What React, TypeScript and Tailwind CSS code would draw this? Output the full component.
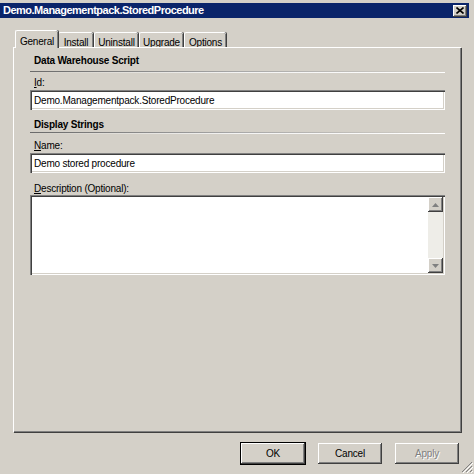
import React from "react";

const raised =
  "shadow-[inset_-1px_-1px_0_#404040,inset_1px_1px_0_#ffffff,inset_-2px_-2px_0_#808080,inset_2px_2px_0_#d4d0c8]";
const sunken =
  "shadow-[inset_1px_1px_0_#808080,inset_2px_2px_0_#404040,inset_-1px_-1px_0_#ffffff,inset_-2px_-2px_0_#d4d0c8]";

function Tab({ label, width, selected }: { label: string; width: string; selected?: boolean }) {
  if (selected) {
    return (
      <div
        className={`${width} relative z-10 -mb-px -mr-px flex h-[18px] items-start justify-center rounded-t-[2px] border-l border-t border-white bg-[#d4d0c8] pt-[3px] shadow-[inset_-1px_0_0_#808080,1px_0_0_#404040]`}
      >
        {label}
      </div>
    );
  }
  return (
    <div
      className={`${width} flex h-[15px] items-start justify-center rounded-t-[2px] border-l border-t border-white bg-[#d4d0c8] pt-[2px] shadow-[inset_-1px_0_0_#808080,1px_0_0_#404040]`}
    >
      {label}
    </div>
  );
}

function Section({ title }: { title: string }) {
  return <div className="h-[13px] pl-[4px] font-bold leading-[13px]">{title}</div>;
}

function Rule() {
  return (
    <div className="flex flex-col">
      <div className="h-px bg-gradient-to-r from-[#6a6a6a] via-[#a8a8a8] to-[#d4d0c8]" />
      <div className="h-px bg-gradient-to-r from-[#d4d0c8] via-[#f4f4f4] to-white" />
    </div>
  );
}

function Label({ hot, rest }: { hot: string; rest: string }) {
  return (
    <div className="h-[13px] pl-[4px] leading-[13px]">
      <span className="underline underline-offset-1">{hot}</span>
      {rest}
    </div>
  );
}

function Field({ value }: { value: string }) {
  return (
    <div className={`flex h-[20px] items-center bg-white pl-[4px] pt-px ${sunken}`}>{value}</div>
  );
}

function Arrow({ up }: { up?: boolean }) {
  return (
    <div className={`flex h-[15px] w-[15px] items-center justify-center bg-[#d4d0c8] ${raised}`}>
      <svg width="7" height="4" viewBox="0 0 7 4">
        {up ? (
          <polygon points="3.5,0 7,4 0,4" fill="#808080" />
        ) : (
          <polygon points="0,0 7,0 3.5,4" fill="#808080" />
        )}
      </svg>
    </div>
  );
}

function Button({ label, primary, disabled }: { label: string; primary?: boolean; disabled?: boolean }) {
  return (
    <div
      className={`flex h-[21px] w-[64px] items-center justify-center bg-[#d4d0c8] ${
        primary ? "outline outline-1 outline-black" : ""
      } ${raised}`}
    >
      <span className={disabled ? "text-[#808080] [text-shadow:1px_1px_0_#ffffff]" : ""}>{label}</span>
    </div>
  );
}

export default function App() {
  return (
    <div
      className="relative flex h-[474px] w-[474px] flex-col overflow-hidden bg-[#d4d0c8] text-[10px] tracking-[-0.2px] text-black"
      style={{ fontFamily: '"Liberation Sans", Arial, sans-serif' }}
    >
      {/* Title bar */}
      <div className="mr-[5px] mt-[3px] flex h-[15px] items-center justify-between bg-[#0a246a] pl-[3px] pr-[2px]">
        <span className="text-[11px] font-bold tracking-[-0.5px] text-white">
          Demo.Managementpack.StoredProcedure
        </span>
        <div className={`flex h-[12px] w-[14px] items-center justify-center bg-[#d4d0c8] ${raised}`}>
          <svg width="8" height="7" viewBox="0 0 8 7">
            <path d="M0.5 0.5 L7.5 6.5 M7.5 0.5 L0.5 6.5" stroke="#000" strokeWidth="1.6" />
          </svg>
        </div>
      </div>

      {/* Tabs */}
      <div className="ml-[15px] mt-[12px] flex h-[17px] items-end gap-[1px]">
        <Tab label="General" width="w-[43px]" selected />
        <Tab label="Install" width="w-[35px]" />
        <Tab label="Uninstall" width="w-[44px]" />
        <Tab label="Upgrade" width="w-[44px]" />
        <Tab label="Options" width="w-[42px]" />
      </div>

      {/* Tab panel */}
      <div className="mx-[13px] flex h-[385px] flex-col border-l border-t border-white px-[16px] shadow-[inset_-1px_-1px_0_#808080,1px_1px_0_#404040]">
        <div className="mt-[6px]">
          <Section title="Data Warehouse Script" />
        </div>
        <div className="mt-[4px]">
          <Rule />
        </div>
        <div className="mt-[3px]">
          <Label hot="I" rest="d:" />
        </div>
        <div className="mt-px">
          <Field value="Demo.Managementpack.StoredProcedure" />
        </div>
        <div className="mt-[8px]">
          <Section title="Display Strings" />
        </div>
        <div className="mt-[1px]">
          <Rule />
        </div>
        <div className="mt-[5px]">
          <Label hot="N" rest="ame:" />
        </div>
        <div className="mt-px">
          <Field value="Demo stored procedure" />
        </div>
        <div className="mt-[9px]">
          <Label hot="D" rest="escription (Optional):" />
        </div>
        <div className={`flex h-[80px] bg-white p-[2px] ${sunken}`}>
          <div className="flex-1" />
          <div className="flex w-[15px] flex-col bg-[#eeede8]">
            <Arrow up />
            <div className="flex-1" />
            <Arrow />
          </div>
        </div>
      </div>

      {/* Buttons */}
      <div className="mt-[11px] flex justify-end gap-[13px] pr-[15px]">
        <Button label="OK" primary />
        <Button label="Cancel" />
        <Button label="Apply" disabled />
      </div>

      {/* Resize grip */}
      <svg className="absolute bottom-[1px] right-[1px]" width="12" height="12" viewBox="0 0 12 12">
        <path d="M11 1 L1 11 M11 5 L5 11 M11 9 L9 11" stroke="#808080" strokeWidth="1" />
        <path d="M12 2 L2 12 M12 6 L6 12 M12 10 L10 12" stroke="#ffffff" strokeWidth="1" />
      </svg>
    </div>
  );
}
